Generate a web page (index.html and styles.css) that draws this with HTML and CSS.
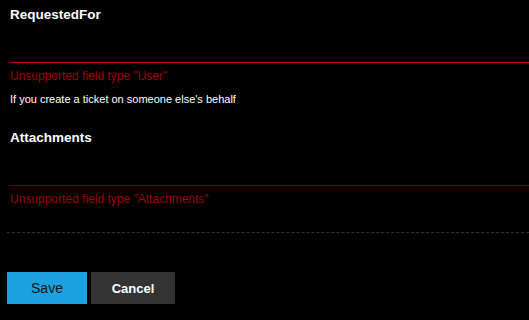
FILE: index.html
```html
<!DOCTYPE html>
<html>
<head>
<meta charset="utf-8">
<link rel="stylesheet" href="styles.css">
</head>
<body>
<div class="form">
  <div class="field">
    <div class="label">RequestedFor</div>
    <div class="input focused"></div>
    <div class="error">Unsupported field type "User"</div>
    <div class="help">If you create a ticket on someone else's behalf</div>
  </div>
  <div class="field second">
    <div class="label">Attachments</div>
    <div class="input"></div>
    <div class="error">Unsupported field type "Attachments"</div>
  </div>
  <div class="divider"></div>
  <div class="actions">
    <button class="btn save">Save</button>
    <button class="btn cancel">Cancel</button>
  </div>
</div>
</body>
</html>
```
FILE: styles.css
```css
html, body {
  margin: 0;
  padding: 0;
  background: #000;
  height: 100%;
  overflow: hidden;
}
.form {
  padding: 5px 0 0 7px;
  font-family: "Liberation Sans", Arial, sans-serif;
  color: #fff;
}
.field {
  padding-left: 3px;
}
.field.second {
  margin-top: 21px;
}
.label {
  font-size: 13.5px;
  font-weight: bold;
  line-height: 20px;
  height: 20px;
}
.input {
  height: 37px;
  border-bottom: 1px solid #6b0000;
}
.input.focused {
  border-bottom-color: #c00000;
}
.error {
  color: #a00000;
  font-size: 12px;
  line-height: 16px;
  margin-top: 5px;
}
.help {
  font-size: 11px;
  line-height: 16px;
  margin-top: 7px;
}
.divider {
  margin-top: 25px;
  border-top: 1px dashed #333;
}
.actions {
  display: flex;
  gap: 4px;
  margin-top: 39px;
}
.btn {
  height: 32px;
  border: none;
  margin: 0;
  padding: 0;
  font-family: "Liberation Sans", Arial, sans-serif;
  font-size: 14px;
}
.save {
  width: 80px;
  background: #1ba1e2;
  color: #111;
}
.cancel {
  width: 84px;
  background: #333;
  color: #fff;
  font-weight: bold;
  font-size: 13px;
}
```
